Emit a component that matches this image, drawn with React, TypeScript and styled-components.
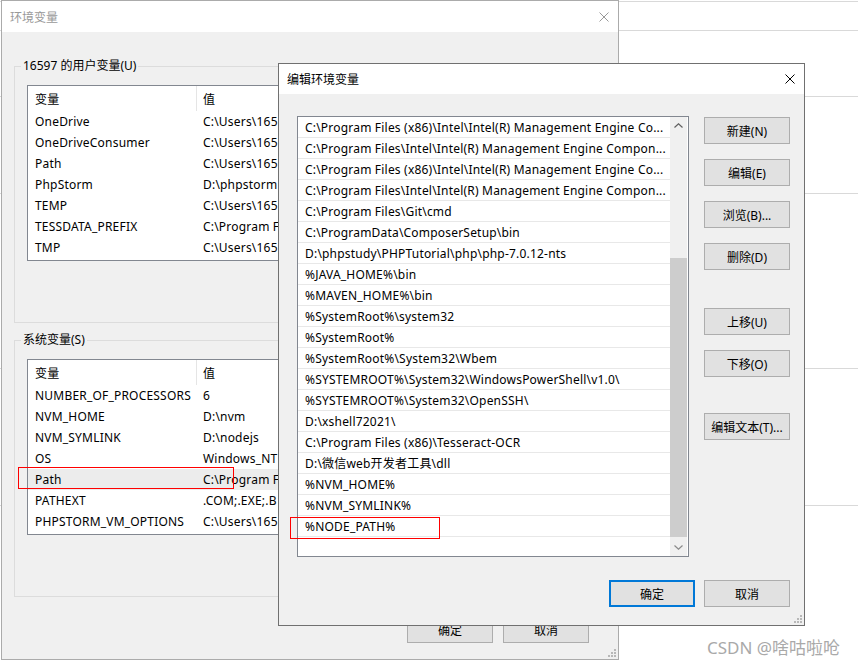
import React from "react";
import styled, { createGlobalStyle } from "styled-components";

const GlobalStyle = createGlobalStyle`
  html, body {
    margin: 0;
    padding: 0;
    background: #fff;
  }
  body {
    font-family: "Noto Sans", "Noto Sans CJK SC", sans-serif;
    font-size: 12px;
    color: #000;
  }
  * {
    box-sizing: border-box;
  }
`;

const Desktop = styled.div`
  position: relative;
  width: 858px;
  height: 667px;
  overflow: hidden;
  background: #fff;
`;

// window behind both dialogs, only its row rules show through
const Backdrop = styled.div`
  position: absolute;
  inset: 0;
  display: flex;
  flex-direction: column;
  padding-top: 1px;
`;

const BackRow = styled.div<{ $h?: number }>`
  height: ${(p) => (p.$h ? `${p.$h}px` : "auto")};
  flex: ${(p) => (p.$h ? "0 0 auto" : "1")};
  border-top: 1px solid #d9d9d9;
`;

const Window = styled.section<{
  $x: number;
  $y: number;
  $w: number;
  $h: number;
  $active?: boolean;
}>`
  position: absolute;
  left: ${(p) => p.$x}px;
  top: ${(p) => p.$y}px;
  width: ${(p) => p.$w}px;
  height: ${(p) => p.$h}px;
  display: flex;
  flex-direction: column;
  background: #f0f0f0;
  border: 1px solid ${(p) => (p.$active ? "#707070" : "#ababab")};
`;

const TitleBar = styled.header<{ $h: number; $active?: boolean }>`
  flex: 0 0 ${(p) => p.$h}px;
  display: flex;
  align-items: center;
  justify-content: space-between;
  padding: 0 9px 0 8px;
  background: #fff;
  color: ${(p) => (p.$active ? "#000" : "#999")};
  font-size: 12px;
`;

const CloseIcon = ({ color }: { color: string }) => (
  <svg width="10" height="10" viewBox="0 0 10 10">
    <path d="M0.5 0.5 L9.5 9.5 M9.5 0.5 L0.5 9.5" stroke={color} strokeWidth="1" fill="none" />
  </svg>
);

const Grip = styled.svg`
  position: absolute;
  right: 2px;
  bottom: 2px;
`;

const ResizeGrip = () => (
  <Grip width="8" height="8" viewBox="0 0 8 8">
    {[
      [6, 0],
      [3, 3],
      [6, 3],
      [0, 6],
      [3, 6],
      [6, 6],
    ].map(([x, y]) => (
      <rect key={`${x}-${y}`} x={x} y={y} width="2" height="2" fill="#b8b8b8" />
    ))}
  </Grip>
);

const Body = styled.div<{ $pad: string }>`
  flex: 1;
  display: flex;
  flex-direction: column;
  padding: ${(p) => p.$pad};
  min-height: 0;
`;

const Group = styled.fieldset<{ $gap?: number }>`
  margin: 0 0 ${(p) => p.$gap ?? 0}px 0;
  padding: 10px 12px 61px 12px;
  border: 1px solid #dcdcdc;
  min-width: 0;

  legend {
    margin-left: -6px;
    padding: 0 2px;
    line-height: 18px;
    font-size: 12px;
  }
`;

const VarList = styled.div`
  height: 176px;
  border: 1px solid #828790;
  background: #fff;
  overflow: hidden;
`;

const VarRow = styled.div<{ $head?: boolean; $selected?: boolean }>`
  display: grid;
  grid-template-columns: 169px 81px;
  height: ${(p) => (p.$head ? 25 : 21)}px;
  align-items: center;
  background: ${(p) => (p.$selected ? "#ececec" : "transparent")};
  white-space: nowrap;
`;

const VarCell = styled.div<{ $head?: boolean; $first?: boolean }>`
  height: 100%;
  display: flex;
  align-items: center;
  padding-left: ${(p) => (p.$first ? 7 : 6)}px;
  overflow: hidden;
  letter-spacing: 0.2px;
  border-right: ${(p) => (p.$head && p.$first ? "1px solid #e5e5e5" : "none")};
`;

const ButtonRow = styled.div<{ $gap: number; $padRight?: number }>`
  margin-top: auto;
  display: flex;
  justify-content: flex-end;
  gap: ${(p) => p.$gap}px;
  padding-right: ${(p) => p.$padRight ?? 0}px;
`;

const Button = styled.button<{ $primary?: boolean; $top?: number }>`
  width: 86px;
  height: 27px;
  margin: ${(p) => p.$top ?? 0}px 0 0 0;
  padding: 0;
  background: #e1e1e1;
  border: ${(p) => (p.$primary ? "2px solid #0078d7" : "1px solid #adadad")};
  font-family: inherit;
  font-size: 12px;
  color: #000;
  flex-shrink: 0;
`;

const EditArea = styled.div`
  display: flex;
  gap: 15px;
`;

const PathList = styled.div`
  width: 392px;
  height: 441px;
  border: 1px solid #828790;
  background: #fff;
  display: flex;
`;

const PathRows = styled.div`
  flex: 1;
  min-width: 0;
`;

const PathRow = styled.div`
  height: 21px;
  line-height: 21px;
  padding: 0 0 0 7px;
  border-bottom: 1px solid #e8e8e8;
  white-space: nowrap;
  overflow: hidden;
  text-overflow: ellipsis;
  letter-spacing: 0.2px;
`;

const ScrollTrack = styled.div`
  width: 17px;
  margin-right: 1px;
  background: #f0f0f0;
  display: flex;
  flex-direction: column;
`;

const ScrollArrow = styled.div<{ $end?: boolean }>`
  height: 17px;
  margin-top: ${(p) => (p.$end ? "auto" : "0")};
  display: flex;
  align-items: center;
  justify-content: center;
`;

const ScrollThumb = styled.div<{ $top: number; $h: number }>`
  margin-top: ${(p) => p.$top}px;
  height: ${(p) => p.$h}px;
  background: #cdcdcd;
`;

const SideButtons = styled.div`
  display: flex;
  flex-direction: column;
  padding-top: 1px;
`;

const Annotation = styled.div<{ $x: number; $y: number; $w: number; $h: number }>`
  position: absolute;
  left: ${(p) => p.$x}px;
  top: ${(p) => p.$y}px;
  width: ${(p) => p.$w}px;
  height: ${(p) => p.$h}px;
  border: 1px solid #ff0000;
  pointer-events: none;
`;

const Watermark = styled.div`
  position: absolute;
  left: 707px;
  top: 637px;
  font-size: 17px;
  line-height: 22px;
  color: #a9a9a9;
  white-space: nowrap;
`;

const Chevron = ({ up, color }: { up?: boolean; color: string }) => (
  <svg width="9" height="5" viewBox="0 0 9 5">
    <path
      d={up ? "M0.5 4.5 L4.5 0.8 L8.5 4.5" : "M0.5 0.5 L4.5 4.2 L8.5 0.5"}
      stroke={color}
      strokeWidth="1.2"
      fill="none"
    />
  </svg>
);

// value column only shows what is left of the edit dialog's edge
const userVars: [string, string][] = [
  ["OneDrive", "C:\\Users\\165"],
  ["OneDriveConsumer", "C:\\Users\\165"],
  ["Path", "C:\\Users\\165"],
  ["PhpStorm", "D:\\phpstorm"],
  ["TEMP", "C:\\Users\\165"],
  ["TESSDATA_PREFIX", "C:\\Program F"],
  ["TMP", "C:\\Users\\165"],
];

const systemVars: [string, string][] = [
  ["NUMBER_OF_PROCESSORS", "6"],
  ["NVM_HOME", "D:\\nvm"],
  ["NVM_SYMLINK", "D:\\nodejs"],
  ["OS", "Windows_NT"],
  ["Path", "C:\\Program F"],
  ["PATHEXT", ".COM;.EXE;.B"],
  ["PHPSTORM_VM_OPTIONS", "C:\\Users\\165"],
];

const pathEntries = [
  "C:\\Program Files (x86)\\Intel\\Intel(R) Management Engine Co...",
  "C:\\Program Files\\Intel\\Intel(R) Management Engine Compon...",
  "C:\\Program Files (x86)\\Intel\\Intel(R) Management Engine Co...",
  "C:\\Program Files\\Intel\\Intel(R) Management Engine Compon...",
  "C:\\Program Files\\Git\\cmd",
  "C:\\ProgramData\\ComposerSetup\\bin",
  "D:\\phpstudy\\PHPTutorial\\php\\php-7.0.12-nts",
  "%JAVA_HOME%\\bin",
  "%MAVEN_HOME%\\bin",
  "%SystemRoot%\\system32",
  "%SystemRoot%",
  "%SystemRoot%\\System32\\Wbem",
  "%SYSTEMROOT%\\System32\\WindowsPowerShell\\v1.0\\",
  "%SYSTEMROOT%\\System32\\OpenSSH\\",
  "D:\\xshell72021\\",
  "C:\\Program Files (x86)\\Tesseract-OCR",
  "D:\\微信web开发者工具\\dll",
  "%NVM_HOME%",
  "%NVM_SYMLINK%",
  "%NODE_PATH%",
];

const VariableTable = ({ rows, selected }: { rows: [string, string][]; selected?: string }) => (
  <VarList>
    <VarRow $head>
      <VarCell $head $first>
        变量
      </VarCell>
      <VarCell $head>值</VarCell>
    </VarRow>
    {rows.map(([name, value]) => (
      <VarRow key={name} $selected={name === selected}>
        <VarCell $first>{name}</VarCell>
        <VarCell>{value}</VarCell>
      </VarRow>
    ))}
  </VarList>
);

export default function App() {
  return (
    <Desktop>
      <GlobalStyle />
      <Backdrop>
        <BackRow $h={29} />
        <BackRow $h={66} />
        <BackRow $h={97} />
        <BackRow $h={175} />
        <BackRow $h={137} />
        <BackRow />
      </Backdrop>

      <Window $x={1} $y={0} $w={618} $h={660}>
        <TitleBar $h={31}>
          <span>环境变量</span>
          <CloseIcon color="#999" />
        </TitleBar>
        <Body $pad="25px 12px 16px 12px">
          <Group $gap={8}>
            <legend>16597 的用户变量(U)</legend>
            <VariableTable rows={userVars} />
          </Group>
          <Group>
            <legend>系统变量(S)</legend>
            <VariableTable rows={systemVars} selected="Path" />
          </Group>
          <ButtonRow $gap={10} $padRight={17}>
            <Button>确定</Button>
            <Button>取消</Button>
          </ButtonRow>
        </Body>
        <ResizeGrip />
      </Window>

      <Window $x={278} $y={63} $w={527} $h={563} $active>
        <TitleBar $h={30} $active>
          <span>编辑环境变量</span>
          <CloseIcon color="#000" />
        </TitleBar>
        <Body $pad="22px 14px 18px 18px">
          <EditArea>
            <PathList>
              <PathRows>
                {pathEntries.map((entry, i) => (
                  <PathRow key={i}>{entry}</PathRow>
                ))}
              </PathRows>
              <ScrollTrack>
                <ScrollArrow>
                  <Chevron up color="#606060" />
                </ScrollArrow>
                <ScrollThumb $top={124} $h={279} />
                <ScrollArrow $end>
                  <Chevron color="#8a8a8a" />
                </ScrollArrow>
              </ScrollTrack>
            </PathList>
            <SideButtons>
              <Button>新建(N)</Button>
              <Button $top={15}>编辑(E)</Button>
              <Button $top={15}>浏览(B)...</Button>
              <Button $top={15}>删除(D)</Button>
              <Button $top={38}>上移(U)</Button>
              <Button $top={15}>下移(O)</Button>
              <Button $top={36}>编辑文本(T)...</Button>
            </SideButtons>
          </EditArea>
          <ButtonRow $gap={9}>
            <Button $primary>确定</Button>
            <Button>取消</Button>
          </ButtonRow>
        </Body>
        <ResizeGrip />
      </Window>

      <Annotation $x={18} $y={467} $w={216} $h={22} />
      <Annotation $x={290} $y={517} $w={150} $h={22} />

      <Watermark>CSDN @啥咕啦呛</Watermark>
    </Desktop>
  );
}
